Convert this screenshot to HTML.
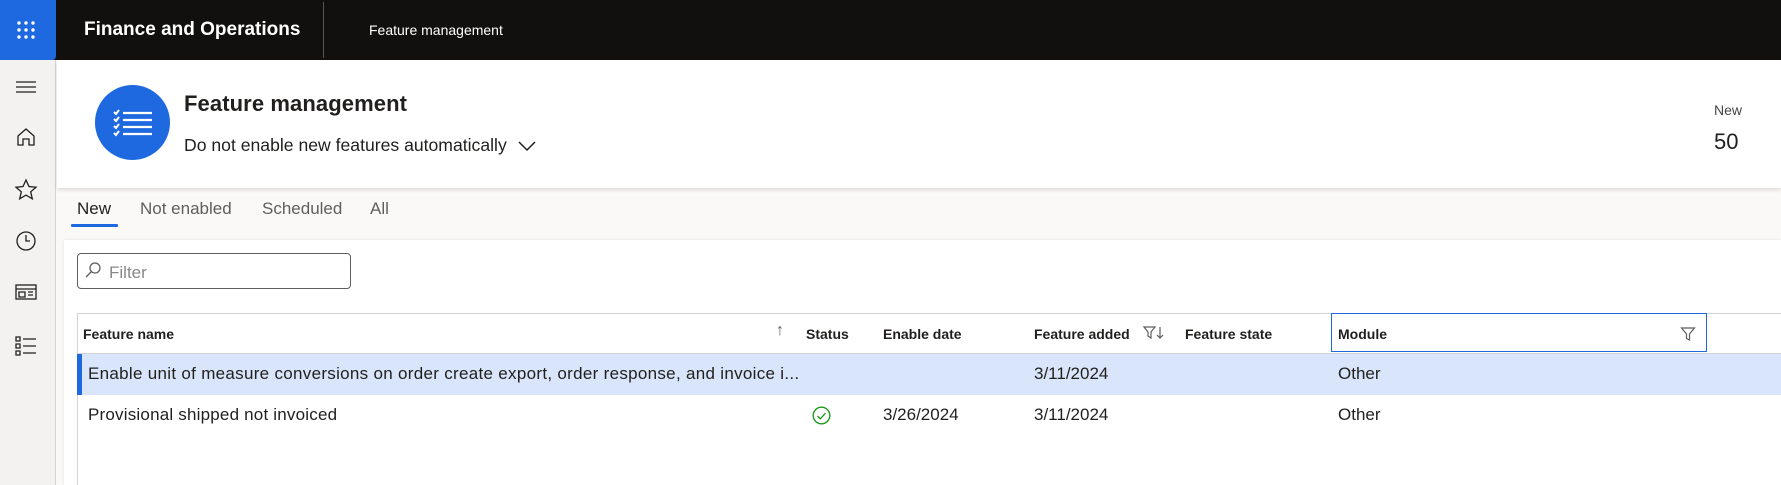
<!DOCTYPE html>
<html><head><meta charset="utf-8"><style>
*{margin:0;padding:0;box-sizing:border-box}
body{width:1781px;height:485px;overflow:hidden;background:#faf9f8;font-family:"Liberation Sans",sans-serif;color:#201f1e;position:relative}
.a{position:absolute;white-space:nowrap}
</style></head><body>
<div class="a" style="left:0;top:0;width:1781px;height:60px;background:#11100f"></div>
<div class="a" style="left:0;top:0;width:56px;height:60px;background:#1f69e0;border-radius:0 0 4px 0"></div>
<svg class="a" style="left:16px;top:20px" width="22" height="22" viewBox="0 0 22 22" fill="#fff"><circle cx="3" cy="3" r="1.7"/><circle cx="10" cy="3" r="1.7"/><circle cx="17" cy="3" r="1.7"/><circle cx="3" cy="10" r="1.7"/><circle cx="10" cy="10" r="1.7"/><circle cx="17" cy="10" r="1.7"/><circle cx="3" cy="17" r="1.7"/><circle cx="10" cy="17" r="1.7"/><circle cx="17" cy="17" r="1.7"/></svg>
<div class="a" style="left:84px;top:19px;color:#fff;font-size:19px;font-weight:bold">Finance and Operations</div>
<div class="a" style="left:323px;top:2px;width:1px;height:56px;background:#555"></div>
<div class="a" style="left:369px;top:22px;color:#fff;font-size:14px">Feature management</div>
<!-- sidebar -->
<div class="a" style="left:0;top:60px;width:56px;height:425px;background:#f3f2f1;border-right:1px solid #d6d4d2"></div>
<svg class="a" style="left:0;top:60px" width="56" height="320" fill="none" stroke="#201f1e" stroke-width="1.3">
<path d="M16 22h20M16 27h20M16 32h20"/>
<path d="M18 76l8-7 8 7v9h-5v-6h-6v6h-5z"/>
<path d="M26 120l3 6.5 7 .7-5.3 4.6 1.6 7-6.3-3.7-6.3 3.7 1.6-7-5.3-4.6 7-.7z"/>
<circle cx="26" cy="181" r="9"/><path d="M26 175v6h4"/>
<rect x="16" y="225" width="20" height="14"/><path d="M16 229h20M19 232h6v5h-6zM28 232h5M28 235h5"/>
<path d="M16 277h4v4h-4zM16 284h4v4h-4zM16 291h4v4h-4zM23 279h13M23 286h13M23 293h13"/>
</svg>
<!-- header panel -->
<div class="a" style="left:57px;top:60px;width:1724px;height:128px;background:#fff;box-shadow:0 2px 4px rgba(0,0,0,.12)"></div>
<div class="a" style="left:95px;top:85px;width:75px;height:75px;border-radius:50%;background:#1f69e0"></div>
<svg class="a" style="left:112px;top:108px" width="44" height="30" fill="none" stroke="#fff" stroke-width="2"><path d="M2 4l2 2 3-4M2 11l2 2 3-4M2 18l2 2 3-4M2 25l2 2 3-4"/><path d="M11 5h29M11 12h29M11 19h29M11 26h29" stroke-width="2.2"/></svg>
<div class="a" style="left:184px;top:91px;font-size:22px;font-weight:bold;letter-spacing:0.1px">Feature management</div>
<div class="a" style="left:184px;top:135px;font-size:17.6px">Do not enable new features automatically</div>
<svg class="a" style="left:517px;top:140px" width="20" height="12" fill="none" stroke="#201f1e" stroke-width="1.5"><path d="M2 2l8 8 8-8"/></svg>
<div class="a" style="left:1714px;top:102px;font-size:14px;color:#484644">New</div>
<div class="a" style="left:1714px;top:129px;font-size:22px">50</div>
<!-- tabs -->
<div class="a" style="left:77px;top:199px;font-size:17px">New</div>
<div class="a" style="left:140px;top:199px;font-size:17px;color:#605e5c">Not enabled</div>
<div class="a" style="left:262px;top:199px;font-size:17px;color:#605e5c">Scheduled</div>
<div class="a" style="left:370px;top:199px;font-size:17px;color:#605e5c">All</div>
<div class="a" style="left:71px;top:224px;width:47px;height:3px;background:#1f69e0;border-radius:1px"></div>
<!-- card -->
<div class="a" style="left:64px;top:240px;width:1717px;height:245px;background:#fff;box-shadow:0 0 3px rgba(0,0,0,.1)"></div>
<div class="a" style="left:77px;top:253px;width:274px;height:36px;border:1px solid #605e5c;border-radius:4px"></div>
<svg class="a" style="left:84px;top:261px" width="18" height="18" fill="none" stroke="#605e5c" stroke-width="1.3"><circle cx="11" cy="7" r="5"/><path d="M7.5 10.5L2 16"/></svg>
<div class="a" style="left:109px;top:263px;font-size:17px;color:#8a8886">Filter</div>
<div class="a" style="left:77px;top:313px;width:1704px;height:1px;background:#d6d4d2"></div>
<div class="a" style="left:77px;top:313px;width:1px;height:172px;background:#d6d4d2"></div>
<div class="a" style="left:78px;top:353px;width:1703px;height:1px;background:#d6d4d2"></div>
<div class="a" style="left:83px;top:326px;font-size:14px;font-weight:bold">Feature name</div>
<div class="a" style="left:776px;top:322px;font-size:16px;color:#605e5c">↑</div>
<div class="a" style="left:806px;top:326px;font-size:14px;font-weight:bold">Status</div>
<div class="a" style="left:883px;top:326px;font-size:14px;font-weight:bold">Enable date</div>
<div class="a" style="left:1034px;top:326px;font-size:14px;font-weight:bold">Feature added</div>
<svg class="a" style="left:1142px;top:324px" width="24" height="18" fill="none" stroke="#605e5c" stroke-width="1.2"><path d="M2 3h11l-4 5v6l-3-2V8z"/><path d="M18 3v11M15 11l3 3 3-3"/></svg>
<div class="a" style="left:1185px;top:326px;font-size:14px;font-weight:bold">Feature state</div>
<div class="a" style="left:1331px;top:313px;width:376px;height:39px;border:1.5px solid #1f69e0"></div>
<div class="a" style="left:1338px;top:326px;font-size:14px;font-weight:bold">Module</div>
<svg class="a" style="left:1680px;top:326px" width="16" height="16" fill="none" stroke="#605e5c" stroke-width="1.2"><path d="M1.5 2h13l-5 6v6l-3-1.5V8z"/></svg>
<!-- rows -->
<div class="a" style="left:78px;top:354px;width:1703px;height:41px;background:#d9e5fa"></div>
<div class="a" style="left:77px;top:354px;width:5px;height:41px;background:#1f69e0"></div>
<div class="a" style="left:88px;top:364px;font-size:17px;letter-spacing:0.3px">Enable unit of measure conversions on order create export, order response, and invoice i...</div>
<div class="a" style="left:1034px;top:364px;font-size:17px">3/11/2024</div>
<div class="a" style="left:1338px;top:364px;font-size:17px">Other</div>
<div class="a" style="left:88px;top:405px;font-size:17px;letter-spacing:0.2px">Provisional shipped not invoiced</div>
<svg class="a" style="left:812px;top:406px" width="19" height="19" fill="none" stroke="#1e9a1e" stroke-width="1.4"><circle cx="9.5" cy="9.5" r="8.3"/><path d="M5.5 10l2.8 2.8 5.2-5.6"/></svg>
<div class="a" style="left:883px;top:405px;font-size:17px">3/26/2024</div>
<div class="a" style="left:1034px;top:405px;font-size:17px">3/11/2024</div>
<div class="a" style="left:1338px;top:405px;font-size:17px">Other</div>
</body></html>
